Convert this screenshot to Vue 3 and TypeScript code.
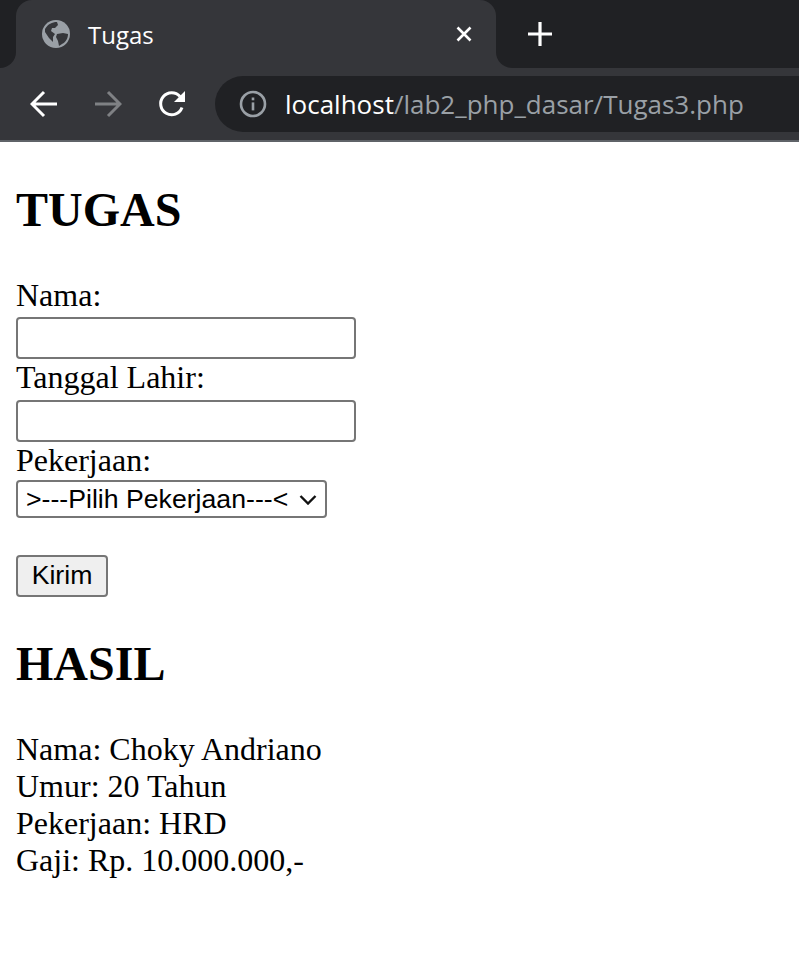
<script setup lang="ts">
const results: string[] = [
  'Nama: Choky Andriano',
  'Umur: 20 Tahun',
  'Pekerjaan: HRD',
  'Gaji: Rp. 10.000.000,-',
]
</script>

<template>
  <div class="window">
    <div class="strip">
      <div class="edge"></div>
      <div class="tab">
        <svg class="globe" width="28" height="28" viewBox="0 0 28 28">
          <circle cx="14" cy="14" r="14" fill="#9aa0a6" />
          <path d="M3 9 C6 4 10 2 15 2 L16 5 L13 8 L10 8 L9 11 L13 14 L11 17 L11 22 L7 18 L3 12 Z" fill="#35363a" />
          <path d="M15 14 L21 13 L26 14 C26 18 24 22 20 24 L17 26 L16 21 L14 17 Z" fill="#35363a" />
        </svg>
        <span class="title">Tugas</span>
        <svg class="close" width="16" height="16" viewBox="0 0 16 16">
          <path d="M1.5 1.5 L14.5 14.5 M14.5 1.5 L1.5 14.5" stroke="#fff" stroke-width="2.6" />
        </svg>
      </div>
      <div class="rest">
        <svg class="plus" width="24" height="24" viewBox="0 0 24 24">
          <path d="M12 0 V24 M0 12 H24" stroke="#fff" stroke-width="3.2" stroke-linecap="round" />
        </svg>
      </div>
    </div>
    <div class="toolbar">
      <svg class="nav" width="28" height="28" viewBox="0 0 28 28">
        <path d="M27 14 H3 M14 2 L2 14 L14 26" fill="none" stroke="#fff" stroke-width="3" />
      </svg>
      <svg class="nav fwd" width="28" height="28" viewBox="0 0 28 28">
        <path d="M1 14 H25 M14 2 L26 14 L14 26" fill="none" stroke="#7f8184" stroke-width="3" />
      </svg>
      <svg class="nav reload" width="28" height="28" viewBox="0 0 28 28">
        <path d="M24 17.5 A11 11 0 1 1 22 6.5" fill="none" stroke="#fff" stroke-width="3" />
        <path d="M27 1 V12 H16 Z" fill="#fff" />
      </svg>
      <div class="omnibox">
        <svg width="28" height="28" viewBox="0 0 28 28">
          <circle cx="14" cy="14" r="12" fill="none" stroke="#9aa0a6" stroke-width="2.6" />
          <rect x="12.7" y="7.5" width="2.6" height="2.8" fill="#9aa0a6" />
          <rect x="12.7" y="12.4" width="2.6" height="8" fill="#9aa0a6" />
        </svg>
        <span class="url"><span class="host">localhost</span>/lab2_php_dasar/Tugas3.php</span>
      </div>
    </div>
    <div class="divider"></div>
  </div>

  <main class="page">
    <h2>TUGAS</h2>
    <form @submit.prevent>
      Nama:<br />
      <input class="field" type="text" /><br />
      Tanggal Lahir:<br />
      <input class="field" type="text" /><br />
      Pekerjaan:<br />
      <span class="select-wrap">
        <select class="select">
          <option>&gt;---Pilih Pekerjaan---&lt;</option>
        </select>
        <svg class="chevron" width="18" height="10" viewBox="0 0 18 10">
          <path d="M1.5 1 L9 8.5 L16.5 1" fill="none" stroke="#111" stroke-width="2.4" />
        </svg>
      </span><br /><br />
      <button class="send" type="submit">Kirim</button>
    </form>
    <h2>HASIL</h2>
    <div class="result">
      <template v-for="line in results" :key="line">{{ line }}<br /></template>
    </div>
  </main>
</template>

<style scoped>
.window {
  font-family: "Open Sans", "Noto Sans", sans-serif;
}
.strip {
  display: flex;
  height: 68px;
  background: linear-gradient(#202124 50%, #35363a 50%);
}
.edge {
  width: 16px;
  background: #202124;
  border-bottom-right-radius: 16px;
}
.tab {
  width: 480px;
  display: flex;
  align-items: center;
  padding: 0 24px 0 26px;
  box-sizing: border-box;
  background: #35363a;
  border-radius: 16px 16px 0 0;
}
.title {
  margin-left: 18px;
  flex: 1;
  color: #fff;
  font-size: 24px;
}
.rest {
  flex: 1;
  display: flex;
  align-items: center;
  padding-left: 32px;
  background: #202124;
  border-bottom-left-radius: 16px;
}
.toolbar {
  height: 72px;
  display: flex;
  align-items: center;
  padding-left: 30px;
  background: #35363a;
  box-sizing: border-box;
  overflow: hidden;
}
.nav {
  flex: none;
  margin-right: 36px;
}
.reload {
  margin-right: 29px;
}
.omnibox {
  flex: none;
  width: 640px;
  height: 56px;
  display: flex;
  align-items: center;
  gap: 18px;
  padding-left: 24px;
  box-sizing: border-box;
  background: #202124;
  border-radius: 28px;
}
.url {
  color: #9aa0a6;
  font-size: 26px;
  white-space: nowrap;
}
.host {
  color: #fff;
}
.divider {
  height: 2px;
  background: #5f6368;
}
.page {
  padding: 0 16px;
  font-family: "Liberation Serif", serif;
  font-size: 32px;
  color: #000;
}
h2 {
  margin: 39.84px 0;
  font-size: 48px;
  font-weight: 700;
}
.field {
  width: 340px;
  height: 42px;
  padding: 2px 4px;
  margin: 0;
  border: 2px solid #767676;
  border-radius: 4px;
  box-sizing: border-box;
  background: #fff;
}
.select-wrap {
  position: relative;
  display: inline-block;
}
.select {
  display: block;
  width: 311px;
  height: 38px;
  margin: 0;
  padding: 0 0 0 8px;
  appearance: none;
  border: 2px solid #767676;
  border-radius: 4px;
  background: #fff;
  color: #000;
  font-family: "Liberation Sans", sans-serif;
  font-size: 26.67px;
}
.chevron {
  position: absolute;
  right: 10px;
  top: 15px;
  pointer-events: none;
}
.send {
  width: 92px;
  height: 42px;
  margin: 0;
  padding: 0;
  border: 2px solid #767676;
  border-radius: 4px;
  background: #efefef;
  color: #000;
  font-family: "Liberation Sans", sans-serif;
  font-size: 26.67px;
}
</style>
